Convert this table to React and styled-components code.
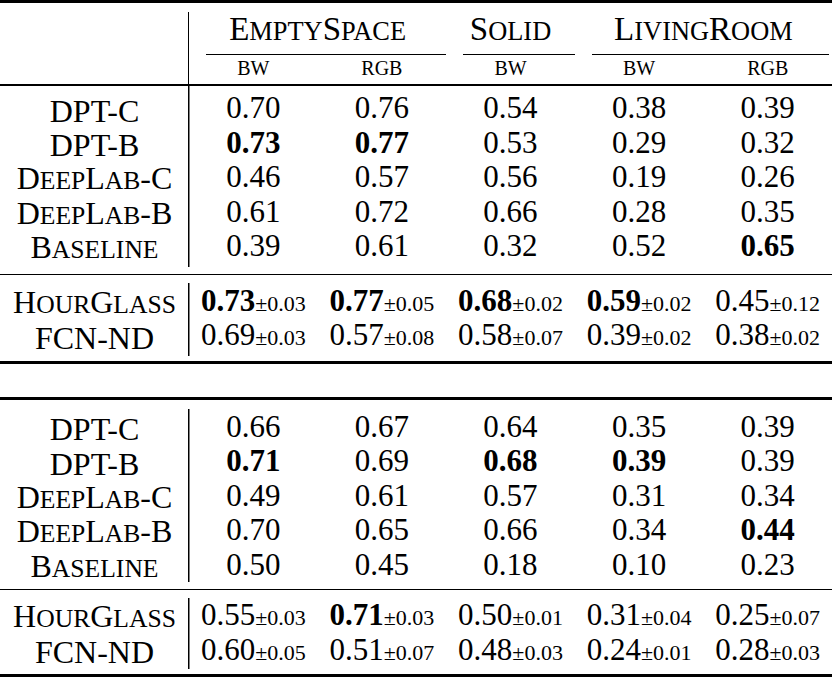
import styled, {createGlobalStyle} from 'styled-components'

const GlobalStyle = createGlobalStyle`
  html, body {
    margin: 0;
    padding: 0;
    background: #fff;
  }
  body {
    font-family: "Liberation Serif", "Times New Roman", "DejaVu Serif", serif;
    color: #000;
  }
`

const SERIF = `"Liberation Serif", "Times New Roman", "DejaVu Serif", serif`
const COLS = '189px repeat(5, 1fr)'

const b = v => ({v, bold: true})

const TABLES = [
    {
        main: [
            ['DPT-C', ['0.70', '0.76', '0.54', '0.38', '0.39']],
            ['DPT-B', [b('0.73'), b('0.77'), '0.53', '0.29', '0.32']],
            ['DeepLab-C', ['0.46', '0.57', '0.56', '0.19', '0.26']],
            ['DeepLab-B', ['0.61', '0.72', '0.66', '0.28', '0.35']],
            ['Baseline', ['0.39', '0.61', '0.32', '0.52', b('0.65')]],
        ],
        ours: [
            ['HourGlass', [b('0.73|0.03'), b('0.77|0.05'), b('0.68|0.02'), b('0.59|0.02'), '0.45|0.12']],
            ['FCN-ND', ['0.69|0.03', '0.57|0.08', '0.58|0.07', '0.39|0.02', '0.38|0.02']],
        ],
    },
    {
        main: [
            ['DPT-C', ['0.66', '0.67', '0.64', '0.35', '0.39']],
            ['DPT-B', [b('0.71'), '0.69', b('0.68'), b('0.39'), '0.39']],
            ['DeepLab-C', ['0.49', '0.61', '0.57', '0.31', '0.34']],
            ['DeepLab-B', ['0.70', '0.65', '0.66', '0.34', b('0.44')]],
            ['Baseline', ['0.50', '0.45', '0.18', '0.10', '0.23']],
        ],
        ours: [
            ['HourGlass', ['0.55|0.03', b('0.71|0.03'), '0.50|0.01', '0.31|0.04', '0.25|0.07']],
            ['FCN-ND', ['0.60|0.05', '0.51|0.07', '0.48|0.03', '0.24|0.01', '0.28|0.03']],
        ],
    },
]

const GROUPS = [
    {title: 'EmptySpace', subs: ['BW', 'RGB']},
    {title: 'Solid', subs: ['BW']},
    {title: 'LivingRoom', subs: ['BW', 'RGB']},
]

// LaTeX-like small caps: lowercase letters become slightly smaller capitals
const SmallCaps = ({children}) => (
    <>
        {children.split('').map((ch, i) =>
            ch !== ch.toUpperCase()
                ? <Sc key={i}>{ch.toUpperCase()}</Sc>
                : <span key={i}>{ch}</span>
        )}
    </>
)

const Value = ({item}) => {
    const cell = typeof item === 'string' ? {v: item, bold: false} : item
    const [main, pm] = cell.v.split('|')
    return (
        <DataCell>
            <Num bold={cell.bold}>{main}</Num>
            {pm && <Pm>±{pm}</Pm>}
        </DataCell>
    )
}

const Block = ({rows, top, bottom}) => (
    <Body top={top} bottom={bottom}>
        {rows.map(([label, values]) =>
            <Row key={label}>
                <Label><SmallCaps>{label}</SmallCaps></Label>
                {values.map((item, i) => <Value key={i} item={item}/>)}
            </Row>
        )}
    </Body>
)

const App = () => {
    return (
        <>
            <GlobalStyle/>
            <Page>
                <TopRule/>
                <TitleRow>
                    <Stub/>
                    {GROUPS.map(g =>
                        <GroupTitle key={g.title} span={g.subs.length}>
                            <SmallCaps>{g.title}</SmallCaps>
                        </GroupTitle>
                    )}
                </TitleRow>
                <SubRow>
                    <Stub/>
                    {GROUPS.map((g, i) =>
                        <SubGroup key={g.title} span={g.subs.length}>
                            <CMidRule last={i === GROUPS.length - 1}/>
                            <SubLabels count={g.subs.length}>
                                {g.subs.map(s => <SubLabel key={s}>{s}</SubLabel>)}
                            </SubLabels>
                        </SubGroup>
                    )}
                </SubRow>
                <MidRule/>
                <Block rows={TABLES[0].main} top={5} bottom={3}/>
                <ThinRule/>
                <Block rows={TABLES[0].ours} top={1} bottom={3}/>
                <BottomRule/>

                <Spacer/>

                <TopRule/>
                <Block rows={TABLES[1].main} top={1} bottom={0}/>
                <ThinRule/>
                <Block rows={TABLES[1].ours} top={0} bottom={2}/>
                <BottomRule/>
            </Page>
        </>
    )
}

export default App


const Page = styled.div`
  width: 832px;
  display: flex;
  flex-direction: column;
  font-family: ${SERIF};
  color: #000;
`

const TopRule = styled.div`
  flex: none;
  border-top: 3px solid #000;
  margin-bottom: 9px;
`

const MidRule = styled.div`
  flex: none;
  border-top: 2px solid #000;
`

const ThinRule = styled.div`
  flex: none;
  border-top: 1.5px solid #000;
  margin: 7px 0 8px;
`

const BottomRule = styled.div`
  flex: none;
  border-top: 3px solid #000;
  margin-top: 5px;
`

const Spacer = styled.div`
  height: 33px;
`

const Grid = styled.div`
  display: grid;
  grid-template-columns: ${COLS};
`

const TitleRow = styled(Grid)`
  height: 37px;
`

const SubRow = styled(Grid)`
  height: 35px;
`

const Stub = styled.div`
  border-right: 1.5px solid #000;
`

const Sc = styled.span`
  font-size: 0.8em;
`

const GroupTitle = styled.div`
  grid-column: span ${p => p.span};
  text-align: center;
  font-size: 33px;
  line-height: 34px;
`

const SubGroup = styled.div`
  grid-column: span ${p => p.span};
  display: flex;
  flex-direction: column;
`

const CMidRule = styled.div`
  height: 1px;
  background: #000;
  margin: 5px ${p => p.last ? 3 : 0}px 0 17px;
`

const SubLabels = styled.div`
  display: grid;
  grid-template-columns: repeat(${p => p.count}, 1fr);
  flex: 1;
`

const SubLabel = styled.div`
  text-align: center;
  font-size: 20px;
  line-height: 26px;
`

const Body = styled.div`
  display: flex;
  flex-direction: column;
  padding-top: ${p => p.top}px;
  padding-bottom: ${p => p.bottom}px;
  background: linear-gradient(#000, #000) 188px 0 / 1.5px 100% no-repeat;
`

const Row = styled(Grid)`
  height: 34.5px;
  align-items: center;
`

const Label = styled.div`
  text-align: center;
  font-size: 32px;
  line-height: 34px;
  white-space: nowrap;
`

const DataCell = styled.div`
  text-align: center;
  line-height: 34px;
  white-space: nowrap;
`

const Num = styled.span`
  font-size: 31px;
  font-weight: ${p => p.bold ? 700 : 400};
`

const Pm = styled.span`
  font-size: 22px;
`
